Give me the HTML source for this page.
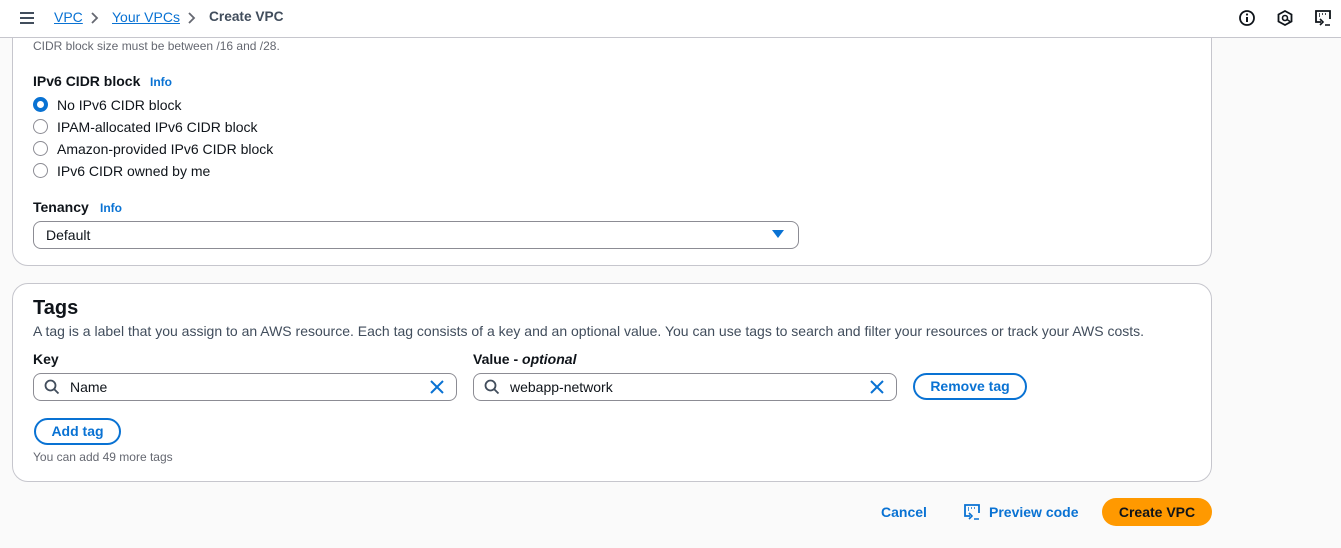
<!DOCTYPE html>
<html><head><meta charset="utf-8"><style>
*{box-sizing:border-box;margin:0;padding:0}
body{width:1341px;height:548px;overflow:hidden;background:#fafafa;font-family:"Liberation Sans",sans-serif;color:#0f141a;position:relative;font-size:14px}
.a{position:absolute;white-space:nowrap}
.hdr{position:absolute;left:0;top:0;width:1341px;height:38px;background:#fff;border-bottom:1px solid #c6c6cd;z-index:2}
.card{position:absolute;left:12px;width:1200px;background:#fff;border:1px solid #c6c6cd;border-radius:16px}
.lnk{color:#0972d3}
.b{font-weight:bold}
.info{color:#0972d3;font-weight:bold;font-size:12px}
.radio{position:absolute;width:15px;height:15px;border:1.5px solid #8c8c94;border-radius:50%;background:#fff}
.radio.on{border:4px solid #0972d3}
.inp{position:absolute;height:28px;border:1px solid #8c8c94;border-radius:8px;background:#fff}
.btn{position:absolute;height:27px;border:2px solid #0972d3;border-radius:20px;color:#0972d3;font-weight:bold;text-align:center;line-height:23px;font-size:14px;background:#fff}
</style></head><body>
<div class="hdr">
<svg class="a" style="left:19px;top:11px" width="16" height="14"><path d="M1 2h14M1 7h14M1 12h14" stroke="#414d5c" stroke-width="2"/></svg>
<span class="a lnk" style="left:54px;top:9px;text-decoration:underline">VPC</span>
<svg class="a" style="left:90px;top:12px" width="10" height="12"><path d="M2 1l5 5-5 5" stroke="#656871" stroke-width="1.8" fill="none"/></svg>
<span class="a lnk" style="left:112px;top:9px;text-decoration:underline">Your VPCs</span>
<svg class="a" style="left:187px;top:12px" width="10" height="12"><path d="M2 1l5 5-5 5" stroke="#656871" stroke-width="1.8" fill="none"/></svg>
<span class="a b" style="left:209px;top:9px;color:#414d5c;font-size:13.7px">Create VPC</span>
<svg class="a" style="left:1238px;top:9px" width="18" height="18"><circle cx="9" cy="9" r="7" stroke="#0f141a" stroke-width="1.8" fill="none"/><path d="M9 8v5" stroke="#0f141a" stroke-width="2"/><circle cx="9" cy="5.5" r="1.1" fill="#0f141a"/></svg>
<svg class="a" style="left:1276px;top:9px" width="18" height="18"><path d="M9 2l6.5 3.5v7L9 16l-6.5-3.5v-7z" stroke="#0f141a" stroke-width="1.8" fill="none"/><circle cx="9" cy="9" r="2.5" stroke="#0f141a" stroke-width="1.6" fill="none"/><path d="M11 10.5l3 2" stroke="#0f141a" stroke-width="1.6"/></svg>
<svg class="a" style="left:1314px;top:9px" width="18" height="18"><path d="M7 13H2V2h14v8" stroke="#0f141a" stroke-width="1.8" fill="none"/><path d="M5 5h1M8 5h1M11 5h1M5 7h1" stroke="#0f141a" stroke-width="1.5"/><path d="M6 10l3 3-3 3M11 16h5" stroke="#0f141a" stroke-width="1.6" fill="none"/></svg>
</div>

<div class="card" style="top:-30px;height:296px"></div>
<span class="a" style="left:33px;top:39px;font-size:12px;color:#656871">CIDR block size must be between /16 and /28.</span>
<span class="a b" style="left:33px;top:73px">IPv6 CIDR block</span>
<span class="a info" style="left:150px;top:75px">Info</span>
<div class="radio on" style="left:33px;top:97px"></div><span class="a" style="left:57px;top:97px">No IPv6 CIDR block</span>
<div class="radio" style="left:33px;top:119px"></div><span class="a" style="left:57px;top:119px">IPAM-allocated IPv6 CIDR block</span>
<div class="radio" style="left:33px;top:141px"></div><span class="a" style="left:57px;top:141px">Amazon-provided IPv6 CIDR block</span>
<div class="radio" style="left:33px;top:163px"></div><span class="a" style="left:57px;top:163px">IPv6 CIDR owned by me</span>
<span class="a b" style="left:33px;top:199px">Tenancy</span>
<span class="a info" style="left:100px;top:201px">Info</span>
<div class="inp" style="left:33px;top:221px;width:766px"></div>
<span class="a" style="left:46px;top:227px">Default</span>
<svg class="a" style="left:772px;top:230px" width="12" height="9"><path d="M0 0h12L6 8z" fill="#0972d3"/></svg>

<div class="card" style="top:283px;height:199px"></div>
<span class="a b" style="left:33px;top:297px;font-size:20px">Tags</span>
<span class="a" style="left:33px;top:323px;font-size:14px;color:#414d5c">A tag is a label that you assign to an AWS resource. Each tag consists of a key and an optional value. You can use tags to search and filter your resources or track your AWS costs.</span>
<span class="a b" style="left:33px;top:351px">Key</span>
<span class="a b" style="left:473px;top:351px">Value - <i>optional</i></span>
<div class="inp" style="left:33px;top:373px;width:424px"></div>
<svg class="a" style="left:44px;top:379px" width="16" height="16"><circle cx="6.5" cy="6.5" r="5" stroke="#414d5c" stroke-width="1.8" fill="none"/><path d="M10 10l4.5 4.5" stroke="#414d5c" stroke-width="1.8"/></svg>
<span class="a" style="left:70px;top:379px">Name</span>
<svg class="a" style="left:429px;top:379px" width="16" height="16"><path d="M2 2l12 12M14 2L2 14" stroke="#0972d3" stroke-width="2"/></svg>
<div class="inp" style="left:473px;top:373px;width:424px"></div>
<svg class="a" style="left:484px;top:379px" width="16" height="16"><circle cx="6.5" cy="6.5" r="5" stroke="#414d5c" stroke-width="1.8" fill="none"/><path d="M10 10l4.5 4.5" stroke="#414d5c" stroke-width="1.8"/></svg>
<span class="a" style="left:510px;top:379px">webapp-network</span>
<svg class="a" style="left:869px;top:379px" width="16" height="16"><path d="M2 2l12 12M14 2L2 14" stroke="#0972d3" stroke-width="2"/></svg>
<div class="btn" style="left:913px;top:373px;width:114px">Remove tag</div>
<div class="btn" style="left:34px;top:418px;width:87px">Add tag</div>
<span class="a" style="left:33px;top:450px;font-size:12px;color:#656871">You can add 49 more tags</span>

<span class="a b lnk" style="left:881px;top:504px">Cancel</span>
<svg class="a" style="left:963px;top:503px" width="18" height="18"><path d="M7 13H2V2h14v8" stroke="#0972d3" stroke-width="1.8" fill="none"/><path d="M5 5h1M8 5h1M11 5h1M5 7h1" stroke="#0972d3" stroke-width="1.5"/><path d="M6 10l3 3-3 3M11 16h5" stroke="#0972d3" stroke-width="1.6" fill="none"/></svg>
<span class="a b lnk" style="left:989px;top:504px">Preview code</span>
<div class="a b" style="left:1102px;top:498px;width:110px;height:28px;background:#ff9900;border-radius:20px;text-align:center;line-height:28px;color:#0f141a">Create VPC</div>
</body></html>
